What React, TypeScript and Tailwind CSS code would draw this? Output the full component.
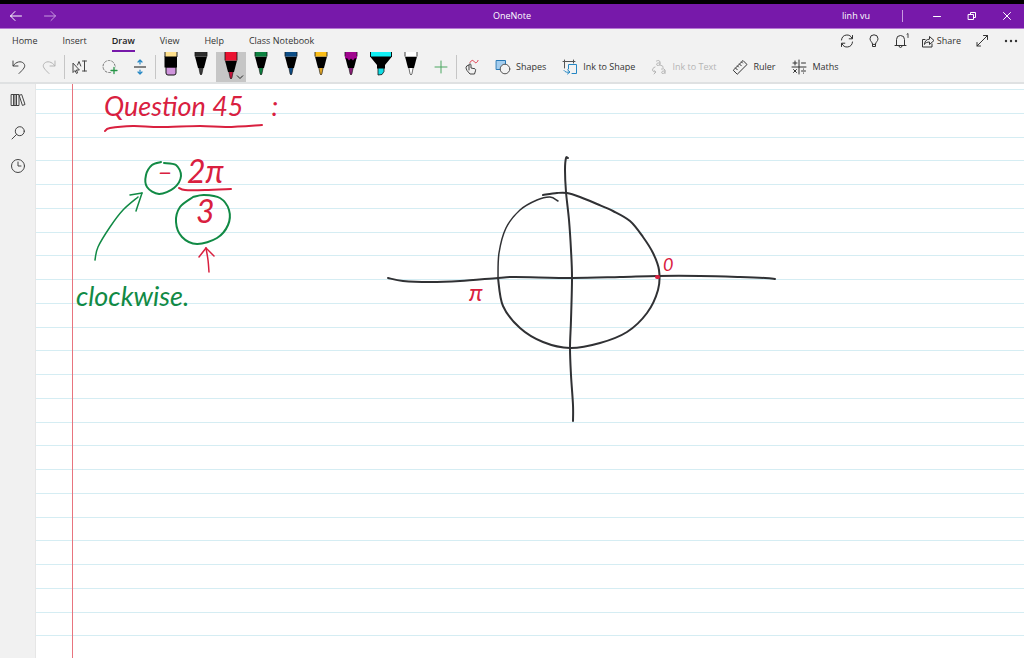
import React from "react";

type IconProps = { children: React.ReactNode; className?: string };

function Icon({ children, className = "" }: IconProps) {
  return (
    <svg
      viewBox="0 0 16 16"
      className={`size-4 shrink-0 ${className}`}
      fill="none"
      stroke="currentColor"
      strokeWidth="1"
      strokeLinecap="round"
      strokeLinejoin="round"
      aria-hidden="true"
    >
      {children}
    </svg>
  );
}

function Tool({ label, children, disabled }: { label: string; children: React.ReactNode; disabled?: boolean }) {
  return (
    <button aria-label={label} disabled={disabled} className="flex w-[30px] shrink-0 items-center justify-center">
      {children}
    </button>
  );
}

function Divider() {
  return <div className="my-[3px] w-px shrink-0 bg-[#c6c6c6]" />;
}

type Pen = { name: string; color: string; tip: string; kind: "eraser" | "pen" | "pencil" | "marker"; selected?: boolean };

const pens: Pen[] = [
  { name: "Eraser", color: "#ffe08c", tip: "#cf95dc", kind: "eraser" },
  { name: "Black pen", color: "#2c2c2c", tip: "#3a3a3a", kind: "pen" },
  { name: "Red pen", color: "#ea1230", tip: "#c3143c", kind: "pen", selected: true },
  { name: "Green pen", color: "#0c8240", tip: "#0c8240", kind: "pen" },
  { name: "Blue pen", color: "#0c4d86", tip: "#0c4d86", kind: "pen" },
  { name: "Yellow pen", color: "#fbbd16", tip: "#e0a526", kind: "pen" },
  { name: "Purple pencil", color: "#a0058e", tip: "#8d1f7a", kind: "pencil" },
  { name: "Aqua highlighter", color: "#12f0f4", tip: "#12dce4", kind: "marker" },
  { name: "White pen", color: "#ffffff", tip: "#ffffff", kind: "pen" },
];

function PenDrawing({ pen }: { pen: Pen }) {
  if (pen.kind === "eraser") {
    return (
      <svg viewBox="0 0 30 30" className="size-[30px]" aria-hidden="true">
        <path d="M9 0h12v5H9z" fill={pen.color} />
        <path d="M9 0v5M21 0v5" stroke="#222" strokeWidth="1" />
        <path d="M10 15h10v6q0 2-2 2h-6q-2 0-2-2z" fill={pen.tip} stroke="#111" />
        <path d="M8.500 4.500h12.500v11H8.500z" fill="#000" />
      </svg>
    );
  }
  if (pen.kind === "marker") {
    return (
      <svg viewBox="0 0 30 30" className="size-[30px]" aria-hidden="true">
        <path d="M12 15.500h6v4l-2 3-4 .5z" fill={pen.tip} stroke="#111" strokeWidth=".8" />
        <path d="M4.500 0h21v5h-21z" fill={pen.color} />
        <path d="M4.500 0v5M25.500 0v5" stroke="#111" />
        <path d="M4 4.500h22l-7 8.500v3.500h-8V13z" fill="#000" />
      </svg>
    );
  }
  const drop = pen.selected ? 4 : 0;
  return (
    <svg viewBox="0 0 30 30" className="size-[30px]" aria-hidden="true">
      <g transform={`translate(0 ${drop})`}>
        <path d="M12.800 15.500h4.400l-1.300 6.500q-.9 2-1.800 0z" fill={pen.tip} stroke="#111" strokeWidth=".6" />
        <path d="M9 4.500h12l-3 11.500h-6z" fill="#000" />
      </g>
      <path d={pen.selected ? "M9 0h12v8.500H9z" : "M9 0h12v4.500H9z"} fill={pen.color} />
      <path d={pen.selected ? "M9 0v8.500M21 0v8.500" : "M9 0v4.500M21 0v4.500"} stroke="#111" strokeWidth=".8" />
      {pen.kind === "pencil" && <path d="M9 4h12v3l-2-1-2 2.500-2-2-2 2-2-2.500-2 1z" fill={pen.color} />}
      {pen.selected && <path d="m21 23.500 3 3 3-3" fill="none" stroke="#222" />}
    </svg>
  );
}

function LabeledTool({ label, icon, disabled }: { label: string; icon: React.ReactNode; disabled?: boolean }) {
  return (
    <button
      disabled={disabled}
      className="flex shrink-0 items-center gap-[5px] px-2 text-[#333] disabled:text-[#b5b5b5]"
    >
      {icon}
      {label}
    </button>
  );
}

function TitleBar() {
  return (
    <header className="border-t-4 border-b border-t-black border-b-[#b678d4] bg-[#7719aa] text-white">
      <div className="grid h-6 grid-cols-3">
        <div className="flex">
          <button aria-label="Back" className="flex w-8 items-center justify-center">
            <Icon><path d="M13.500 8h-11M7 3.500 2.500 8 7 12.500" /></Icon>
          </button>
          <button aria-label="Forward" className="flex w-9 items-center justify-center text-[#c99be0]">
            <Icon><path d="M2.500 8h11M9 3.500l4.500 4.500L9 12.500" /></Icon>
          </button>
        </div>
        <h1 className="flex items-center justify-center">OneNote</h1>
        <div className="flex items-center justify-end">
          <button className="mr-8">linh vu</button>
          <div className="mr-4 h-3 w-px bg-[#c99be0]" />
          <button aria-label="Minimise" className="flex w-[35px] justify-center">
            <Icon><path d="M4.500 8.500h7" /></Icon>
          </button>
          <button aria-label="Restore" className="flex w-[35px] justify-center">
            <Icon><path d="M4.500 6.500h5v5h-5zM6.500 6V4.500h5v5H10" /></Icon>
          </button>
          <button aria-label="Close" className="flex w-[35px] justify-center">
            <Icon><path d="m4.500 4.500 7 7M11.500 4.500l-7 7" /></Icon>
          </button>
        </div>
      </div>
    </header>
  );
}

const tabs = ["Home", "Insert", "Draw", "View", "Help", "Class Notebook"];

function TabRow() {
  return (
    <div className="flex h-[23px] justify-between text-[#333]">
      <nav className="flex gap-[25px] pl-3">
        {tabs.map((tab) => (
          <button
            key={tab}
            className={
              tab === "Draw"
                ? "border-y-2 border-t-transparent border-b-[#7719aa] font-semibold text-[#222]"
                : "border-y-2 border-transparent"
            }
          >
            {tab}
          </button>
        ))}
      </nav>
      <div className="flex">
        <button aria-label="Sync" className="flex w-[27px] items-center justify-center">
          <Icon><path d="M2.500 7a5.500 5.500 0 0 1 10.600-1.500M13.500 2.500v3.300h-3.300M13.500 9A5.500 5.500 0 0 1 2.900 10.500M2.500 13.500v-3.300h3.300" /></Icon>
        </button>
        <button aria-label="Ideas" className="flex w-[27px] items-center justify-center">
          <Icon><path d="M6.500 11c0-2-2.500-2.700-2.500-5.200a4 4 0 0 1 8 0C12 8.300 9.500 9 9.500 11zM6.500 11v2.500h3V11" /></Icon>
        </button>
        <button aria-label="Notifications" className="flex w-[27px] items-center justify-center">
          <Icon>
            <path d="M2 12.500h11M3.500 12.500V6.500a4 4 0 0 1 8 0v6M6 13a1.500 1.500 0 0 0 3 0" />
            <path d="m14 1.200 1-.7v4" strokeWidth=".9" />
          </Icon>
        </button>
        <button className="flex items-center px-[6px]">
          <Icon><path d="M4 6.500H1.500v7.500H11v-3M3.500 11c.3-3 2-4.700 5-4.800V3.500L13 7.500l-4.500 4V9C6.500 9 4.800 9.500 3.500 11z" /></Icon>
          Share
        </button>
        <button aria-label="Full screen" className="flex w-[30px] items-center justify-center">
          <Icon><path d="M3 13 13.500 2.500M9.500 2.500h4v4M3 9.500V13h3.500" /></Icon>
        </button>
        <button aria-label="More" className="flex w-[27px] items-center justify-center">
          <Icon>
            <circle cx="3" cy="8" r="1.200" fill="currentColor" stroke="none" />
            <circle cx="8" cy="8" r="1.200" fill="currentColor" stroke="none" />
            <circle cx="13" cy="8" r="1.200" fill="currentColor" stroke="none" />
          </Icon>
        </button>
      </div>
    </div>
  );
}

function DrawTools() {
  return (
    <div className="flex h-[30px] pl-1">
      <Tool label="Undo">
        <Icon className="text-[#444]"><path d="M2 2v5h5M2.200 6.800C5 2.500 10 1.500 12.800 4.500c2.500 3-.3 5.500-4.800 10" /></Icon>
      </Tool>
      <Tool label="Redo" disabled>
        <Icon className="text-[#b5b5b5]"><path d="M14 2v5H9M13.800 6.800C11 2.500 6 1.500 3.200 4.500c-2.500 3 .3 5.500 4.800 10" /></Icon>
      </Tool>
      <Divider />
      <Tool label="Select objects or type text">
        <Icon className="text-[#444]">
          <path d="M1 4.500v9l2-2 1.500 3 1.200-.7-1.300-2.800H7z" />
          <path d="m5.500 6 1.500-3.500L8.800 7M10.500 2h4M10.500 12h4M12.500 2v10" />
        </Icon>
      </Tool>
      <Tool label="Lasso select">
        <Icon>
          <circle cx="7" cy="7.500" r="6" stroke="#777" strokeDasharray="2 1.800" />
          <path d="M8 11.500h8M12 8v8" stroke="#f2f2f2" strokeWidth="3" />
          <path d="M9 11.500h6M12 8.500v6" stroke="#279547" strokeWidth="1.300" />
        </Icon>
      </Tool>
      <Tool label="Insert space">
        <Icon>
          <path d="M2 8h12" stroke="#828282" strokeWidth="2" strokeLinecap="butt" />
          <path d="M8 5V1M6 3l2-2 2 2M8 11v4M6 13l2 2 2-2" stroke="#2587c4" strokeWidth="1.200" />
        </Icon>
      </Tool>
      <Divider />
      {pens.map((pen) => (
        <button
          key={pen.name}
          aria-label={pen.name}
          aria-pressed={!!pen.selected}
          className={pen.selected ? "shrink-0 bg-[#c6c6c6]" : "shrink-0"}
        >
          <PenDrawing pen={pen} />
        </button>
      ))}
      <Tool label="Add pen">
        <Icon className="text-[#4ba660]"><path d="M8 2v12M2 8h12" /></Icon>
      </Tool>
      <Divider />
      <Tool label="Draw with touch">
        <Icon className="text-[#444]">
          <path d="M5 11V5.500q1-1.500 2 0V9l4 .8q1 .5.500 2L10.500 15H6l-3-3.500q-2-3-.3-4.500L5 6" />
          <path d="M6 3.500C8 0 9.500 1.500 10.500 3s3 .5 3.500-1.500" stroke="#df3144" />
        </Icon>
      </Tool>
      <LabeledTool
        label="Shapes"
        icon={
          <Icon>
            <path d="M1.500 1.500h9v9h-9z" fill="#a4cdee" stroke="#2779b7" />
            <circle cx="10" cy="10" r="4.800" fill="#f2f2f2" stroke="#555" />
          </Icon>
        }
      />
      <LabeledTool
        label="Ink to Shape"
        icon={
          <Icon>
            <path d="M1 2.500h12M2.500 1v8M11.500 1v3" stroke="#555" />
            <path d="M6.500 8V5.500h8v9H10M6.500 10v-2M2 11.500c1.500 2 3 2 5.500 1.500M5.500 10.800 8 13l-2.500 2" stroke="#2587c4" />
          </Icon>
        }
      />
      <LabeledTool
        disabled
        label="Ink to Text"
        icon={
          <Icon>
            <path d="M5.500 2q3-1.500 3.500 1v3.500M9 4C6 3.500 4.800 5 6 6.300q1.500.7 3-.8M10.500 10q3-1 3.500 1v3.500M14 12c-3-.3-4 1-3 2.300q1.500.7 3-.8M4 8c-4 1.500-3 5 0 5M3 11.500 5 13l-2 2M10 6.500c2 0 2 1 2 2" />
          </Icon>
        }
      />
      <LabeledTool
        label="Ruler"
        icon={
          <Icon>
            <path d="m1.500 11 9.500-9.500 4 4L5.500 15zM3.500 9l1.800 1.800M5.500 7l1 1M7.500 5l1.800 1.800M9.500 3l1 1" />
          </Icon>
        }
      />
      <LabeledTool
        label="Maths"
        icon={
          <Icon>
            <path d="M8 1v14M1 8h14M4 2v4M2 4h4M10.500 4h4M2.500 10.500l3 3M5.500 10.500l-3 3M10.500 12h4M12.500 10v.2M12.500 14v.2" />
          </Icon>
        }
      />
    </div>
  );
}

function Sidebar() {
  return (
    <aside className="flex w-9 shrink-0 flex-col border-r border-[#e6e6e6] bg-[#f1f1f1] text-[#444]">
      <button aria-label="Notebooks" className="flex h-8 items-center justify-center">
        <Icon><path d="M1.500 2.500H4v11H1.500zM4 2.500h2.500v11H4zM6.500 2.500H9v11H6.500zM9.500 3.200l2.200-.7 3.300 10-2.200.8z" /></Icon>
      </button>
      <button aria-label="Search" className="flex h-[33px] items-center justify-center">
        <Icon><path d="M6.500 9.500 2 14" /><circle cx="9.800" cy="6.200" r="4.500" /></Icon>
      </button>
      <button aria-label="Recent notes" className="flex h-[33px] items-center justify-center">
        <Icon><circle cx="8" cy="8" r="6.500" /><path d="M8 4v4h3" /></Icon>
      </button>
    </aside>
  );
}

type Point = [number, number];

// Catmull-Rom spline through the sampled pen positions.
function smooth(points: Point[]) {
  let d = `M${points[0][0]} ${points[0][1]}`;
  for (let i = 0; i < points.length - 1; i++) {
    const before = points[Math.max(i - 1, 0)];
    const from = points[i];
    const to = points[i + 1];
    const after = points[Math.min(i + 2, points.length - 1)];
    d += `C${from[0] + (to[0] - before[0]) / 6} ${from[1] + (to[1] - before[1]) / 6} ${to[0] - (after[0] - from[0]) / 6} ${to[1] - (after[1] - from[1]) / 6} ${to[0]} ${to[1]}`;
  }
  return d;
}

const BLACK = "#303134";
const RED = "#d9203f";
const GREEN = "#118a45";

const strokes: { color: string; width: number; points: Point[] }[] = [
  { color: BLACK, width: 2, points: [[388, 278], [403, 281], [430, 282], [460, 281], [498, 278], [515, 277], [572, 278], [620, 277], [658, 276], [700, 276], [740, 277], [765, 278], [775, 279]] },
  { color: BLACK, width: 2, points: [[568, 158], [566, 158], [565, 170], [566, 192], [569, 220], [571, 250], [572, 278], [571, 320], [570, 348], [571, 375], [573, 405], [573, 421]] },
  { color: BLACK, width: 2, points: [[543, 195], [557, 193], [567, 193], [580, 197], [597, 204], [613, 211], [630, 221], [643, 237], [653, 253], [659, 270], [658, 290], [647, 313], [627, 332], [600, 343], [570, 348], [543, 342], [520, 328], [503, 306], [498, 278]] },
  { color: BLACK, width: 1.5, points: [[498, 278], [499, 253], [506, 228], [520, 210], [537, 200], [550, 197], [558, 201]] },
  { color: RED, width: 2, points: [[105, 131], [110, 128], [133, 126], [160, 127], [200, 126], [227, 127], [262, 125]] },
  { color: RED, width: 2, points: [[179, 188], [185, 190], [205, 190], [231, 189]] },
  { color: RED, width: 1.5, points: [[209, 272], [208, 260], [206, 248]] },
  { color: RED, width: 1.5, points: [[199, 257], [206, 248]] },
  { color: RED, width: 1.5, points: [[206, 248], [214, 256]] },
  { color: RED, width: 4, points: [[657, 277], [658, 277]] },
  { color: GREEN, width: 2, points: [[161, 162], [152, 165], [146, 175], [147, 187], [159, 194], [174, 188], [181, 176], [176, 165], [164, 163]] },
  { color: GREEN, width: 2, points: [[193, 197], [180, 207], [176, 222], [182, 237], [197, 244], [217, 238], [228, 225], [229, 210], [220, 198], [204, 195], [193, 197]] },
  { color: GREEN, width: 1.5, points: [[95, 260], [98, 247], [110, 227], [123, 210], [138, 197]] },
  { color: GREEN, width: 1.5, points: [[130, 195], [142, 193]] },
  { color: GREEN, width: 1.5, points: [[142, 193], [139, 202], [136, 211]] },
];

const inkText = "absolute whitespace-nowrap leading-none italic font-['Lato','Open_Sans',sans-serif]";

function Page() {
  return (
    <main className="relative flex-1 overflow-hidden bg-white">
      <svg className="absolute inset-0 h-full w-full" fill="none" strokeLinecap="round" strokeLinejoin="round" aria-hidden="true">
        <defs>
          <pattern id="rules" y="5" width="8" height="95" patternUnits="userSpaceOnUse">
            <path d="M0 .5h8M0 24.500h8M0 48.500h8M0 71.500h8" stroke="#d5edf3" strokeLinecap="butt" />
          </pattern>
        </defs>
        <rect width="100%" height="100%" fill="url(#rules)" />
        <path d="M36.500 0v4000" stroke="#e8747e" />
        <g transform="translate(-36 -84)">
          {strokes.map((stroke, i) => (
            <path key={i} d={smooth(stroke.points)} stroke={stroke.color} strokeWidth={stroke.width} />
          ))}
        </g>
      </svg>
      <p className={`${inkText} top-2 left-[68px] flex gap-7 text-[27px] text-[#d9203f]`}>
        <span>Question 45</span>
        <span>:</span>
      </p>
      <span className={`${inkText} top-[76px] left-[122px] text-[24px] text-[#d9203f]`}>−</span>
      <span className={`${inkText} top-[71px] left-[151px] text-[32px] text-[#d9203f]`}>2π</span>
      <span className={`${inkText} top-[111px] left-[160px] text-[32px] text-[#d9203f]`}>3</span>
      <p className={`${inkText} top-[198px] left-10 text-[27px] text-[#118a45]`}>clockwise.</p>
      <span className={`${inkText} top-[196px] left-[433px] text-[24px] text-[#d9203f]`}>π</span>
      <span className={`${inkText} top-[171px] left-[627px] text-[18px] text-[#d9203f]`}>0</span>
    </main>
  );
}

export default function App() {
  return (
    <div className="flex min-h-screen flex-col bg-[#f2f2f2] text-[9px] font-['Open_Sans','Noto_Sans',sans-serif]">
      <TitleBar />
      <div className="border-b-2 border-[#dfe1e2]">
        <TabRow />
        <DrawTools />
      </div>
      <div className="flex flex-1">
        <Sidebar />
        <Page />
      </div>
    </div>
  );
}
